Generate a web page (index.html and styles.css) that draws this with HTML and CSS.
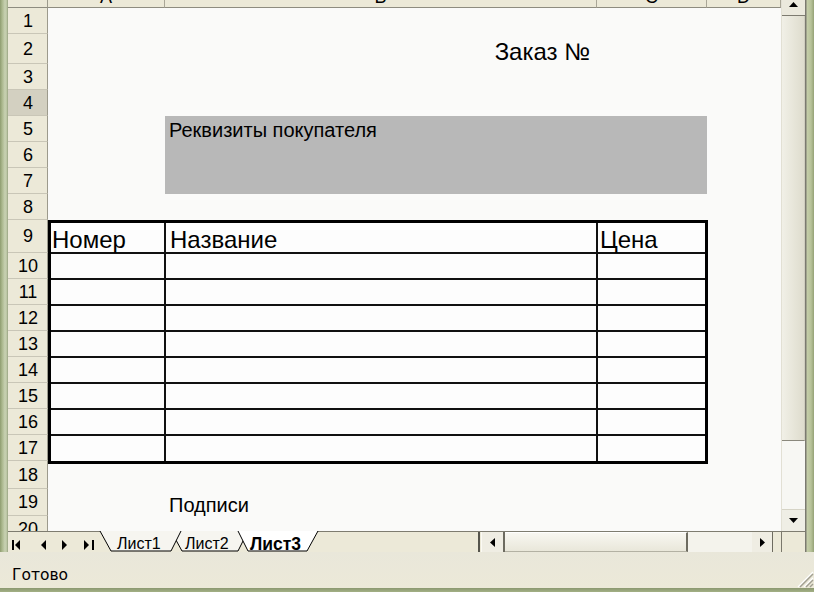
FILE: index.html
```html
<!DOCTYPE html>
<html lang="ru">
<head>
<meta charset="utf-8">
<title>Заказ</title>
<link rel="stylesheet" href="styles.css">
</head>
<body>
<div class="app">
  <div class="top">
    <div class="frame-l"></div>
    <div class="workbook">
      <div class="main">
        <div class="sheet">
          <div class="corner"></div>
          <div class="ch">A</div><div class="ch">B</div><div class="ch">C</div><div class="ch">D</div>
          <div class="rh">1</div>
          <div class="rh">2</div>
          <div class="rh">3</div>
          <div class="rh sel">4</div>
          <div class="rh">5</div>
          <div class="rh">6</div>
          <div class="rh">7</div>
          <div class="rh">8</div>
          <div class="rh">9</div>
          <div class="rh">10</div>
          <div class="rh">11</div>
          <div class="rh">12</div>
          <div class="rh">13</div>
          <div class="rh">14</div>
          <div class="rh">15</div>
          <div class="rh">16</div>
          <div class="rh">17</div>
          <div class="rh">18</div>
          <div class="rh">19</div>
          <div class="rh">20</div>
          <div class="order">Заказ №</div>
          <div class="buyer">Реквизиты покупателя</div>
          <div class="table">
            <div class="th c1">Номер</div><div class="th c2">Название</div><div class="th c3">Цена</div>
            <div></div><div></div><div></div>
            <div></div><div></div><div></div>
            <div></div><div></div><div></div>
            <div></div><div></div><div></div>
            <div></div><div></div><div></div>
            <div></div><div></div><div></div>
            <div></div><div></div><div></div>
            <div></div><div></div><div></div>
          </div>
          <div class="sign">Подписи</div>
        </div>
        <div class="vscroll">
          <div class="vup"><svg width="9" height="5" viewBox="0 0 9 5"><polygon points="0,5 4.5,0 9,5" fill="#000"/></svg></div>
          <div class="vthumb"></div>
          <div class="vtrack"></div>
          <div class="vdown"><svg width="9" height="5" viewBox="0 0 9 5"><polygon points="0,0 4.5,5 9,0" fill="#000"/></svg></div>
        </div>
      </div>
      <div class="tabbar">
        <div class="nav">
          <svg width="90" height="20" viewBox="0 0 90 20">
            <rect x="4" y="8" width="2" height="10" fill="#000"/>
            <polygon points="12,8 7,13 12,18" fill="#000"/>
            <polygon points="38,8 33,13 38,18" fill="#000"/>
            <polygon points="54,8 59,13 54,18" fill="#000"/>
            <polygon points="76,8 81,13 76,18" fill="#000"/>
            <rect x="84" y="8" width="2" height="10" fill="#000"/>
          </svg>
        </div>
        <div class="tabs">
          <svg class="tabshapes" width="380" height="21" viewBox="0 0 380 21">
            <polygon points="73,0 84,20 140,20 150,0" fill="#f6f5f0"/>
            <polyline points="73,0 84,20 140,20 150,0" fill="none" stroke="#000" stroke-width="1"/>
            <polygon points="2,0 13,20 73,20 83,0" fill="#f6f5f0"/>
            <polyline points="2,0 13,20 73,20 83,0" fill="none" stroke="#000" stroke-width="1"/>
            <polygon points="140,0 150,20 209,20 220,0" fill="#ffffff"/>
            <polyline points="140,0 150,20 209,20 220,0" fill="none" stroke="#000" stroke-width="1"/>
          </svg>
          <div class="tl tl1">Лист1</div>
          <div class="tl tl2">Лист2</div>
          <div class="tl tl3">Лист3</div>
        </div>
        <div class="split"></div>
        <div class="hscroll">
          <div class="hbtn hleft"><svg width="5" height="9" viewBox="0 0 5 9"><polygon points="5,0 0,4.5 5,9" fill="#000"/></svg></div>
          <div class="hthumb"></div>
          <div class="hspace"></div>
          <div class="hbtn hright"><svg width="5" height="9" viewBox="0 0 5 9"><polygon points="0,0 5,4.5 0,9" fill="#000"/></svg></div>
          <div class="hend"></div>
        </div>
        <div class="box"></div>
      </div>
    </div>
    <div class="frame-r"></div>
  </div>
  <div class="status">
    <span class="ready">Готово</span>
    <svg class="grip" width="22" height="22" viewBox="0 0 22 22">
      <line x1="21" y1="6" x2="6" y2="21" stroke="#fff" stroke-width="1.2"/>
      <line x1="21" y1="8" x2="8" y2="21" stroke="#a19f92" stroke-width="1.5"/>
      <line x1="21" y1="12" x2="12" y2="21" stroke="#fff" stroke-width="1.2"/>
      <line x1="21" y1="14" x2="14" y2="21" stroke="#a19f92" stroke-width="1.5"/>
      <line x1="21" y1="18" x2="18" y2="21" stroke="#a19f92" stroke-width="1.5"/>
    </svg>
  </div>
  <div class="frame-b"></div>
</div>
</body>
</html>
```

FILE: styles.css
```css
* { box-sizing: border-box; }

body {
  margin: 0;
  width: 814px;
  height: 592px;
  overflow: hidden;
  background: #a3b085;
  font-family: "Liberation Sans", Arial, sans-serif;
  color: #000;
}

.app {
  display: flex;
  flex-direction: column;
  height: 592px;
}

.top {
  display: flex;
  height: 552px;
}

.frame-l {
  width: 8px;
  background: linear-gradient(90deg, #8e9c70 0, #a9b68b 2px, #c8d1b2 5px, #b9c3a1 7px, #8f9a7a 8px);
}

.frame-r {
  width: 9px;
  background: linear-gradient(90deg, #7b7a70 0, #7b7a70 1px, #c5cea9 2px, #b7c299 6px, #95a277 9px);
}

.workbook {
  width: 797px;
  display: flex;
  flex-direction: column;
}

.main {
  display: flex;
  height: 531px;
}

/* ---------- sheet grid ---------- */
.sheet {
  width: 773px;
  height: 531px;
  overflow: hidden;
  display: grid;
  grid-template-columns: 40px 117px 432px 110px 74px;
  grid-template-rows: 8px 26px 30px 26px 26px 26px 26px 26px 26px 33px repeat(8, 26px) 28px 27px 26px;
  background: #fafaf9;
}

.corner {
  background: #ece9d8;
  border-right: 1px solid #9c9a8c;
  border-bottom: 1px solid #8e8c80;
}

.ch {
  background: #ece9d8;
  border-right: 1px solid #a9a697;
  border-bottom: 1px solid #8e8c80;
  display: flex;
  justify-content: center;
  align-items: flex-end;
  font-size: 18px;
  line-height: 18px;
  padding-bottom: 1px;
  overflow: hidden;
}

.rh {
  grid-column: 1;
  background: #ece9d8;
  border-right: 1px solid #9c9a8c;
  border-bottom: 1px solid #c9c6b7;
  display: flex;
  align-items: center;
  justify-content: center;
  font-size: 18px;
  line-height: 18px;
  padding-left: 1px;
}

.rh.sel { background: #d3d0c1; }

.order {
  grid-row: 3;
  grid-column: 3;
  display: flex;
  justify-content: flex-end;
  align-items: flex-end;
  font-size: 24px;
  line-height: 24px;
  padding-right: 7px;
}

.buyer {
  grid-row: 6 / 9;
  grid-column: 3 / 5;
  background: #b8b8b8;
  font-size: 20px;
  line-height: 20px;
  padding: 4px 0 0 4px;
}

.table {
  grid-row: 10 / 19;
  grid-column: 2 / 5;
  margin: 0 -1px -3px 0;
  border: 3px solid #000;
  display: grid;
  grid-template-columns: 115px 432px 1fr;
  grid-template-rows: 31px repeat(7, 26px) 1fr;
  background: #fdfdfd;
}

.table > div {
  border-right: 2px solid #111;
  border-bottom: 2px solid #111;
}

.table > div:nth-child(3n) { border-right: 0; }
.table > div:nth-last-child(-n+3) { border-bottom: 0; }

.th {
  display: flex;
  align-items: flex-end;
  font-size: 24px;
  line-height: 24px;
}
.th.c1 { padding-left: 1px; }
.th.c2 { padding-left: 4px; }
.th.c3 { padding-left: 2px; }

.sign {
  grid-row: 20;
  grid-column: 3;
  display: flex;
  align-items: flex-end;
  font-size: 20px;
  line-height: 20px;
  padding: 0 0 1px 4px;
}

/* ---------- vertical scrollbar ---------- */
.vscroll {
  width: 24px;
  display: flex;
  flex-direction: column;
  background: #f7f7f3;
  border-left: 1px solid #e2e0d4;
}

.vup {
  height: 16px;
  display: flex;
  justify-content: center;
  align-items: flex-start;
  padding-top: 2px;
  background: #ebe9dd;
  border-bottom: 1px solid #7d7b70;
}

.vthumb {
  height: 425px;
  background: linear-gradient(90deg, #f1f0e7, #dedccd);
  border-bottom: 1px solid #8a887c;
  border-right: 1px solid #cfcdbf;
}

.vtrack { flex: 1; }

.vdown {
  height: 22px;
  display: flex;
  justify-content: center;
  align-items: flex-start;
  padding-top: 8px;
  background: #efeee5;
  border-top: 1px solid #d6d4c6;
}

/* ---------- tab bar ---------- */
.tabbar {
  display: flex;
  height: 21px;
  background: #ece9d8;
  border-top: 1px solid #7e7c70;
}

.nav {
  width: 90px;
  height: 20px;
}

.nav svg { display: block; }

.tabs {
  position: relative;
  width: 380px;
  display: flex;
  padding-left: 19px;
  font-size: 16px;
  line-height: 24px;
}

.tabshapes {
  position: absolute;
  left: 0;
  top: -1px;
}

.tl { position: relative; }
.tl1 { width: 68px; }
.tl2 { width: 65px; }
.tl3 { font-weight: bold; font-size: 17.5px; }

.split {
  width: 4px;
  border-left: 2px solid #55544c;
  border-right: 1px solid #fbfaf4;
}

.hscroll {
  width: 299px;
  display: flex;
}

.hbtn {
  display: flex;
  align-items: center;
  justify-content: center;
  border-right: 2px solid #6d6b60;
  background: #efede3;
}

.hleft { width: 23px; }
.hright { width: 21px; border-right-width: 1px; }

.hthumb {
  width: 183px;
  background: linear-gradient(#f8f7f1, #e9e7da);
  border-right: 2px solid #6d6b60;
  border-bottom: 1px solid #b3b1a3;
  border-top: 1px solid #fff;
}

.hspace {
  flex: 1;
  background: #f4f3ec;
}

.hend { width: 8px; }

.box {
  width: 24px;
  border-left: 1px solid #7a786c;
  background: #ece9d8;
}

/* ---------- status bar ---------- */
.status {
  height: 36px;
  display: flex;
  align-items: flex-start;
  background: linear-gradient(#e9e7da, #ece9d8);
  padding-left: 12px;
  font-family: "DejaVu Sans", Verdana, sans-serif;
  font-size: 15.5px;
}

.ready {
  margin-top: 14px;
  line-height: 18px;
}

.grip {
  margin-left: auto;
  align-self: flex-end;
  display: block;
}

.frame-b {
  height: 4px;
  background: linear-gradient(#8b9870, #a3b085);
}
```
